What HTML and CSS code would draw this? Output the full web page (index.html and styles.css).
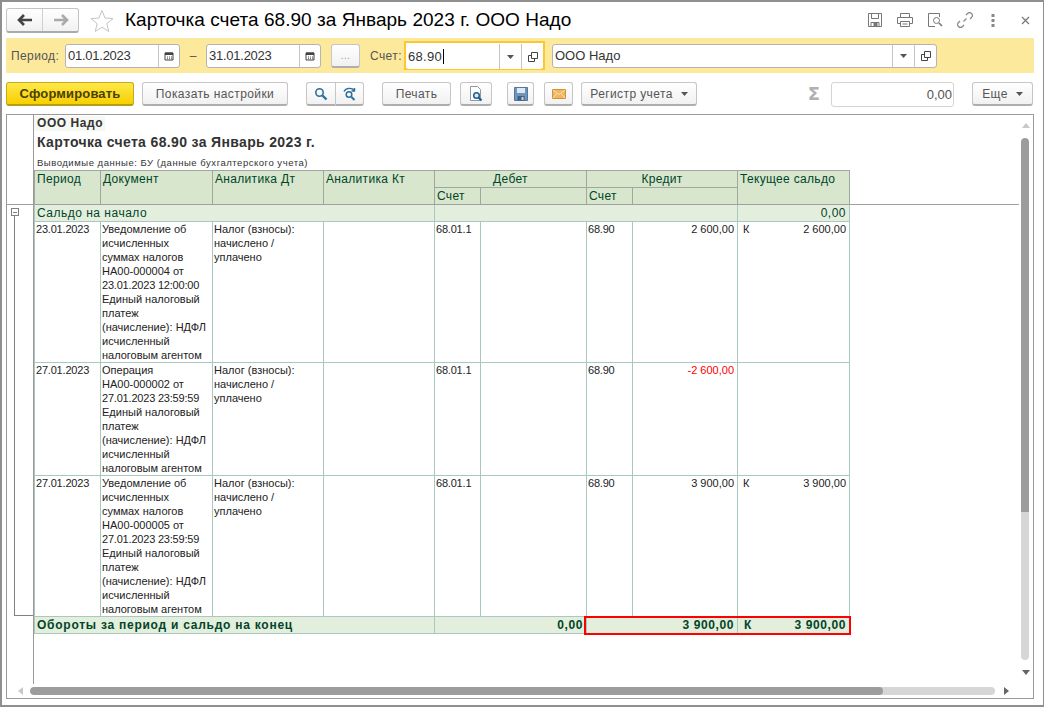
FILE: index.html
```html
<!DOCTYPE html>
<html lang="ru">
<head>
<meta charset="utf-8">
<title>Карточка счета</title>
<link rel="stylesheet" href="styles.css">
</head>
<body>
<svg class="defs" width="0" height="0">
  <symbol id="cal" viewBox="0 0 10 10"><path d="M1 2h8v7H1z" fill="none" stroke="#444"/><path d="M1 1.500h8V4H1z" fill="#444"/><path d="M3 5.500h1v1H3zM5 5.500h1v1H5zM7 5.500h1v1H7zM3 7.200h1v1H3zM5 7.200h1v1H5zM7 7.200h1v1H7z" fill="#555"/></symbol>
  <symbol id="open" viewBox="0 0 10 10"><path d="M3.500.5h6v6h-6z" fill="none" stroke="#444"/><path d="M3.500 3.500H.5v6h6V6.500" fill="none" stroke="#444"/></symbol>
  <symbol id="caret" viewBox="0 0 7 4"><path d="M0 0h7L3.500 4z" fill="#555"/></symbol>
</svg>
<main class="window">
  <header class="titlebar">
    <div class="nav">
      <button class="nav-btn"><svg width="16" height="12" viewBox="0 0 16 12"><path d="M7 1 2 6l5 5M2 6h13" fill="none" stroke="#444" stroke-width="2.600"/></svg></button>
      <button class="nav-btn"><svg width="16" height="12" viewBox="0 0 16 12"><path d="m9 1 5 5-5 5M14 6H1" fill="none" stroke="#aaa" stroke-width="2.600"/></svg></button>
    </div>
    <svg class="star" width="24" height="23" viewBox="0 0 24 23"><path d="m12 1.500 3 7.500 8 .6-6.200 5.100 2 7.800-6.800-4.300-6.800 4.300 2-7.800L1 9.600 9 9z" fill="#fff" stroke="#c4c4c4"/></svg>
    <h1 class="title">Карточка счета 68.90 за Январь 2023 г. ООО Надо</h1>
    <div class="win-tools">
      <svg width="16" height="16" viewBox="0 0 16 16" fill="none" stroke="#777"><path d="M1.500 1.500h13v13h-13zM4.500 1.500v5h7v-5M4 14.500v-4h8v4"/><path d="M7 11h3v3.500H7z" fill="#777"/></svg>
      <svg width="18" height="16" viewBox="0 0 18 16" fill="none" stroke="#777"><path d="M4.500 5V1.500h9V5M4 11.500H1.500v-6h15v6H14M4.500 9.500h9v5h-9zM6.500 12h5"/></svg>
      <svg width="17" height="16" viewBox="0 0 17 16" fill="none" stroke="#777"><path d="M8 14.500H1.500v-13h11V5"/><circle cx="9.500" cy="8.500" r="3"/><path d="m12 11 3 3" stroke-width="1.600"/></svg>
      <svg width="16" height="16" viewBox="0 0 16 16" fill="none" stroke="#888" stroke-width="1.200"><path d="M6.500 9.500 9.500 6.500M9 3l1.500-1.500a2.800 2.800 0 0 1 4 4L13 7M7 13l-1.500 1.500a2.800 2.800 0 0 1-4-4L3 9"/></svg>
      <svg class="dots" width="4" height="14" viewBox="0 0 4 14" fill="#888"><path d="M.5 1h3v3h-3zM.5 6h3v3h-3zM.5 11h3v3h-3z"/></svg>
      <svg class="close" width="9" height="9" viewBox="0 0 9 9" fill="none" stroke="#777" stroke-width="1.200"><path d="m1 1 7 7M8 1 1 8"/></svg>
    </div>
  </header>

  <section class="filters">
    <label class="lbl lbl-period">Период:</label>
    <div class="field date"><span class="val">01.01.2023</span><span class="seg seg-cal"><svg width="10" height="10"><use href="#cal"/></svg></span></div>
    <span class="dash">–</span>
    <div class="field date"><span class="val">31.01.2023</span><span class="seg seg-cal"><svg width="10" height="10"><use href="#cal"/></svg></span></div>
    <button class="btn btn-dots">...</button>
    <label class="lbl lbl-acc">Счет:</label>
    <div class="focus">
      <div class="field acc"><span class="val">68.90<i class="cursor"></i></span><span class="seg"><svg width="7" height="4"><use href="#caret"/></svg></span><span class="seg"><svg width="10" height="10"><use href="#open"/></svg></span></div>
    </div>
    <div class="field org"><span class="val">ООО Надо</span><span class="seg"><svg width="7" height="4"><use href="#caret"/></svg></span><span class="seg"><svg width="10" height="10"><use href="#open"/></svg></span></div>
  </section>

  <section class="toolbar">
    <button class="btn btn-primary">Сформировать</button>
    <button class="btn btn-settings">Показать настройки</button>
    <div class="group">
      <button class="btn btn-icon"><svg width="14" height="14" viewBox="0 0 14 14" fill="none" stroke="#2b6f9e"><circle cx="5.500" cy="5.500" r="3.700" stroke-width="1.600"/><path d="m8.500 8.500 4 4" stroke-width="2.400"/></svg></button>
      <button class="btn btn-icon"><svg width="16" height="14" viewBox="0 0 16 14" fill="none" stroke="#2b6f9e"><circle cx="7" cy="7.500" r="2.800" stroke-width="1.500"/><path d="m9.500 10 3 3" stroke-width="2"/><path d="M2 4.500C4 .5 10 .5 12.500 3.500M12.500 1v3h-3" stroke-width="1.400"/></svg></button>
    </div>
    <button class="btn btn-print">Печать</button>
    <button class="btn btn-icon btn-preview"><svg width="14" height="16" viewBox="0 0 14 16"><path d="M1.500.5h7l3 3v11h-10z" fill="#fff" stroke="#8a9aa8"/><circle cx="7.500" cy="9.500" r="2.800" fill="#dbeaf5" stroke="#1f5f8b" stroke-width="1.500"/><path d="m9.500 11.500 3 3" stroke="#1f5f8b" stroke-width="2.200"/></svg></button>
    <button class="btn btn-icon btn-save"><svg width="14" height="14" viewBox="0 0 14 14"><path d="M.5.500h13v13H.5z" fill="#6f94bd" stroke="#54769c"/><path d="M3 1h8v5H3z" fill="#dfe7ef"/><path d="M3.500 9h7v4.500h-7z" fill="#3f5f85"/><path d="M7.500 10h2v3h-2z" fill="#c9d6e3"/></svg></button>
    <button class="btn btn-icon btn-mail"><svg width="14" height="10" viewBox="0 0 14 10"><path d="M.5.500h13v9H.5z" fill="#eeb75f" stroke="#d2933a"/><path d="m1 1 6 4.500L13 1M1 9l4-4.500M13 9 9 4.500" fill="none" stroke="#fbe2ae"/></svg></button>
    <button class="btn btn-menu">Регистр учета<svg class="caret" width="7" height="4"><use href="#caret"/></svg></button>
    <span class="sigma">Σ</span>
    <div class="sum">0,00</div>
    <button class="btn btn-more">Еще<svg class="caret" width="7" height="4"><use href="#caret"/></svg></button>
  </section>

  <section class="report">
    <div class="gutter">
      <span class="tree-minus"></span>
      <span class="tree-line"></span>
    </div>
    <div class="sheet">
      <div class="r-org">ООО Надо</div>
      <div class="r-title">Карточка счета 68.90 за Январь 2023 г.</div>
      <div class="r-note">Выводимые данные: БУ (данные бухгалтерского учета)</div>
      <table class="grid">
        <colgroup><col class="c1"><col class="c2"><col class="c3"><col class="c4"><col class="c5"><col class="c6"><col class="c7"><col class="c8"><col class="c9"></colgroup>
        <thead>
          <tr class="h1">
            <th rowspan="2">Период</th><th rowspan="2">Документ</th><th rowspan="2">Аналитика Дт</th><th rowspan="2">Аналитика Кт</th>
            <th colspan="2" class="center">Дебет</th><th colspan="2" class="center">Кредит</th><th rowspan="2">Текущее сальдо</th>
          </tr>
          <tr class="h2"><th>Счет</th><th></th><th>Счет</th><th></th></tr>
        </thead>
        <tbody>
          <tr class="subtotal"><td colspan="4">Сальдо на начало</td><td colspan="4"></td><td class="num">0,00</td></tr>
          <tr class="row-10">
            <td class="digits">23.01.2023</td>
            <td>Уведомление об<br>исчисленных<br>суммах налогов<br>НА00-000004 от<br><span class="digits">23.01.2023 12:00:00</span><br>Единый налоговый<br>платеж<br>(начисление): НДФЛ<br>исчисленный<br>налоговым агентом</td>
            <td>Налог (взносы):<br>начислено /<br>уплачено</td><td></td><td class="digits">68.01.1</td><td></td><td class="digits">68.90</td><td class="num">2 600,00</td>
            <td><div class="bal"><span>К</span><span>2 600,00</span></div></td>
          </tr>
          <tr class="row-8">
            <td class="digits">27.01.2023</td>
            <td>Операция<br>НА00-000002 от<br><span class="digits">27.01.2023 23:59:59</span><br>Единый налоговый<br>платеж<br>(начисление): НДФЛ<br>исчисленный<br>налоговым агентом</td>
            <td>Налог (взносы):<br>начислено /<br>уплачено</td><td></td><td class="digits">68.01.1</td><td></td><td class="digits">68.90</td><td class="num neg">-2 600,00</td><td></td>
          </tr>
          <tr class="row-10">
            <td class="digits">27.01.2023</td>
            <td>Уведомление об<br>исчисленных<br>суммах налогов<br>НА00-000005 от<br><span class="digits">27.01.2023 23:59:59</span><br>Единый налоговый<br>платеж<br>(начисление): НДФЛ<br>исчисленный<br>налоговым агентом</td>
            <td>Налог (взносы):<br>начислено /<br>уплачено</td><td></td><td class="digits">68.01.1</td><td></td><td class="digits">68.90</td><td class="num">3 900,00</td>
            <td><div class="bal"><span>К</span><span>3 900,00</span></div></td>
          </tr>
          <tr class="total">
            <td colspan="4">Обороты за период и сальдо на конец</td><td colspan="2" class="num">0,00</td>
            <td colspan="2" class="num">3 900,00</td>
            <td><div class="bal"><span>К</span><span>3 900,00</span></div></td>
          </tr>
        </tbody>
      </table>
      <span class="red-box"></span>
    </div>
    <span class="head-rule"></span>
    <div class="vscroll"><span class="arr-up"></span><span class="v-track"><span class="v-thumb"></span></span><span class="arr-down"></span></div>
    <div class="hscroll"><span class="arr-left"></span><span class="h-track"><span class="h-thumb"></span></span><span class="arr-right"></span></div>
  </section>
</main>
</body>
</html>
```
FILE: styles.css
```css
* { box-sizing: border-box; }
html, body { margin: 0; padding: 0; background: #fff; }
body { font-family: "Liberation Sans", Arial, sans-serif; color: #333; width: 1045px; height: 707px; overflow: hidden; }
.defs { position: absolute; }
.window { width: 1044px; height: 707px; border: 1px solid #8f8f8f; border-left-width: 2px; border-top-width: 2px; border-bottom-width: 2px; display: flex; flex-direction: column; padding: 0 9px 0 4px; }

.titlebar { height: 36px; display: flex; align-items: center; flex: none; }
.nav { display: flex; width: 73px; height: 25px; border: 1px solid #c4c4c4; border-bottom: 2px solid #aaa; border-radius: 3px; background: linear-gradient(#fff, #f1f1f1); }
.nav-btn { flex: 1; border: 0; background: none; padding: 0; display: flex; align-items: center; justify-content: center; }
.nav-btn + .nav-btn { border-left: 1px solid #d0d0d0; }
.star { margin-left: 11px; flex: none; }
.title { margin: 0 0 0 11px; font-size: 19px; font-weight: 400; color: #000; letter-spacing: 0.04px; white-space: nowrap; flex: 1; }
.win-tools { display: flex; align-items: center; gap: 13px; padding-right: 4px; }
.win-tools .dots { margin-left: 5px; }
.win-tools .close { margin-left: 13px; }

.filters { height: 35px; margin-top: 0; background: #fce99c; display: flex; align-items: center; flex: none; padding-left: 5px; font-size: 12px; }
.lbl { color: #555; letter-spacing: 0.4px; white-space: nowrap; }
.lbl-period { width: 54px; }
.lbl-acc { width: 34px; margin-left: 10px; }
.field { height: 24px; background: #fff; border: 1px solid #b4b4b4; border-radius: 3px; display: flex; align-items: center; font-size: 13px; color: #333; }
.val { flex: 1; padding-left: 2px; white-space: nowrap; }
.acc .val { letter-spacing: 0.3px; }
.seg { height: 100%; width: 22px; border-left: 1px solid #c4c4c4; display: flex; align-items: center; justify-content: center; flex: none; }
.seg-cal { width: 21px; }
.date { width: 115px; }
.date .val { letter-spacing: -0.25px; }
.dash { width: 26px; text-align: center; color: #555; }
.focus { width: 141px; height: 29px; border: 2px solid #fcc72f; background: #fff; flex: none; padding: 1px 0 0 0; display: flex; }
.focus .field { flex: 1; border: 0; height: 25px; }
.cursor { display: inline-block; width: 1px; height: 15px; background: #000; vertical-align: -3px; margin-left: 1px; }
.org { width: 385px; margin-left: 7px; }

.btn { height: 24px; font: inherit; font-size: 12px; color: #555; background: linear-gradient(#fff, #f1f1f1); border: 1px solid #c6c6c6; border-bottom: 2px solid #aeaeae; border-radius: 3px; padding: 0; letter-spacing: 0.4px; white-space: nowrap; display: flex; align-items: center; justify-content: center; flex: none; }
.btn-dots { width: 29px; margin-left: 10px; font-size: 10px; color: #999; }

.toolbar { height: 24px; margin-top: 9px; display: flex; align-items: center; flex: none; font-size: 13px; padding-left: 0; }
.btn-primary { width: 128px; font-size: 13px; letter-spacing: 0.15px; font-weight: 700; color: #4a4000; background: linear-gradient(#ffe84a, #f6d000); border-color: #c9aa1a; border-bottom-color: #b89c12; }
.btn-settings { width: 146px; margin-left: 8px; }
.group { display: flex; margin-left: 18px; }
.group .btn:first-child { border-radius: 3px 0 0 3px; border-right: 0; }
.group .btn:last-child { border-radius: 0 3px 3px 0; }
.btn-icon { width: 29px; }
.btn-print { width: 69px; margin-left: 18px; }
.btn-preview { width: 32px; margin-left: 9px; }
.btn-save { width: 27px; margin-left: 15px; }
.btn-mail { width: 29px; margin-left: 10px; }
.btn-menu { width: 116px; margin-left: 8px; }
.caret { margin-left: 8px; }
.sigma { width: 14px; margin-left: 110px; font-size: 18px; font-weight: 700; color: #b0b0b0; text-align: center; font-family: "DejaVu Sans", sans-serif; line-height: 1; }
.sum { width: 123px; height: 25px; margin-left: 10px; border: 1px solid #d4d4d4; border-radius: 3px; text-align: right; line-height: 23px; padding-right: 1px; color: #555; font-size: 13px; }
.btn-more { width: 61px; margin-left: 18px; }

.report { position: relative; height: 585px; margin-top: 8px; border: 1px solid #9a9a9a; display: flex; flex: none; overflow: hidden; }
.gutter { width: 27px; flex: none; position: relative; height: 569px; }
.tree-minus { position: absolute; left: 4px; top: 93px; width: 8px; height: 8px; border: 1px solid #808080; background: linear-gradient(#808080, #808080) center / 4px 1px no-repeat #fff; }
.tree-line { position: absolute; left: 7px; top: 101px; width: 20px; height: 400px; border-left: 1px solid #808080; border-bottom: 1px solid #808080; }
.sheet { position: relative; padding-top: 1px; flex: 1; min-width: 0; height: 569px; }
.sheet::before { content: ""; position: absolute; left: -1px; top: 0; bottom: 0; width: 1px; background: #9a9a9a; }
.r-org { height: 15px; padding-left: 3px; width: 71px; font-size: 12px; line-height: 15px; font-weight: 700; color: #333; letter-spacing: 0.55px; background: #f6f8f4; }
.r-title { height: 22px; padding-left: 3px; font-size: 14px; line-height: 22px; font-weight: 700; color: #333; letter-spacing: 0.35px; white-space: nowrap; }
.r-note { height: 17px; padding-left: 3px; font-size: 9.500px; line-height: 19px; color: #333; letter-spacing: 0.53px; white-space: nowrap; }

.grid { border-collapse: collapse; table-layout: fixed; width: 815px; font-size: 11px; color: #222; }
.c1 { width: 66px; } .c2 { width: 112px; } .c3 { width: 111px; } .c4 { width: 111px; } .c5 { width: 46px; } .c6 { width: 106px; } .c7 { width: 46px; } .c8 { width: 105px; } .c9 { width: 112px; }
.grid th { background: #d8e6cd; border: 1px solid #a0a6a0; color: #00452a; font-size: 12px; font-weight: 400; text-align: left; vertical-align: top; padding: 1px 2px 0 2px; line-height: 15px; letter-spacing: 0.32px; white-space: nowrap; }
.grid th.center { text-align: center; }
.h1 { height: 17px; } .h2 { height: 17px; }
.grid td { border: 1px solid #a9c8c0; vertical-align: top; padding: 0 3px 0 1px; line-height: 14px; white-space: nowrap; overflow: hidden; }
.digits { letter-spacing: -0.2px; }
.row-10 { height: 141px; } .row-8 { height: 113px; }
.subtotal { height: 17px; }
.total { height: 17px; }
.grid .subtotal td { background: #e4eedd; color: #00452a; font-size: 12px; line-height: 16px; padding: 0 3px 0 2px; letter-spacing: 0.5px; }
.grid .total td { background: #e4eedd; color: #00452a; font-size: 12px; font-weight: 700; line-height: 16px; padding: 0 3px 0 2px; letter-spacing: 0.75px; }
.grid .total td.num, .grid .total .bal { letter-spacing: 0.6px; }
.grid td.num { text-align: right; }
.neg { color: #f00; }
.bal { display: flex; justify-content: space-between; padding-left: 4px; }
.red-box { position: absolute; left: 550px; top: 501px; width: 267px; height: 19px; border: 2px solid #f00; }
.head-rule { position: absolute; left: 0; top: 89px; width: 1012px; height: 1px; background: #a0a0a0; }

.vscroll { position: absolute; right: 3px; top: 0; bottom: 0; width: 9px; }
.arr-up { position: absolute; left: 1px; top: 8px; border: 4px solid transparent; border-top: 0; border-bottom: 5px solid #c8c8c8; }
.arr-down { position: absolute; left: 1px; top: 555px; border: 4px solid transparent; border-bottom: 0; border-top: 5px solid #666; }
.v-track { position: absolute; left: 0; top: 23px; width: 8px; height: 522px; border-radius: 4px; background: #d6d6d6; overflow: hidden; }
.v-thumb { display: block; width: 100%; height: 374px; border-radius: 4px 4px 0 0; background: #9c9c9c; }
.hscroll { position: absolute; left: 0; right: 0; bottom: 2px; height: 9px; }
.arr-left { position: absolute; left: 11px; top: 0; border: 4px solid transparent; border-left: 0; border-right: 5px solid #c8c8c8; }
.arr-right { position: absolute; left: 997px; top: 0; border: 4px solid transparent; border-right: 0; border-left: 5px solid #666; }
.h-track { position: absolute; left: 23px; top: 0; width: 965px; height: 8px; border-radius: 4px; background: #d6d6d6; overflow: hidden; }
.h-thumb { display: block; height: 100%; width: 853px; border-radius: 4px; background: #9c9c9c; }
```
